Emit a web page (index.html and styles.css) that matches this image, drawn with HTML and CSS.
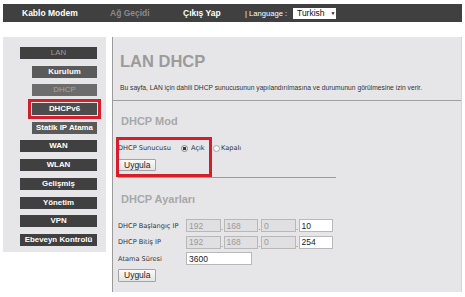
FILE: index.html
```html
<!DOCTYPE html>
<html lang="tr">
<head>
<meta charset="utf-8">
<title>LAN DHCP</title>
<link rel="stylesheet" href="styles.css">
</head>
<body>
<div class="topbar">
  <span class="tb-item tb-home">Kablo Modem</span>
  <span class="tb-item tb-dim">Ağ Geçidi</span>
  <span class="tb-item tb-logout">Çıkış Yap</span>
  <span class="tb-lang">| Language :</span>
  <span class="lang-select">Turkish <span class="caret">▼</span></span>
</div>
<div class="layout">
  <nav class="sidebar">
    <div class="nav muted">LAN</div>
    <div class="nav sub">Kurulum</div>
    <div class="nav sub disabled">DHCP</div>
    <div class="nav sub current">DHCPv6</div>
    <div class="nav sub">Statik IP Atama</div>
    <div class="nav">WAN</div>
    <div class="nav">WLAN</div>
    <div class="nav">Gelişmiş</div>
    <div class="nav">Yönetim</div>
    <div class="nav">VPN</div>
    <div class="nav">Ebeveyn Kontrolü</div>
  </nav>
  <main class="main">
    <div class="header">
      <h1 class="title">LAN DHCP</h1>
      <p class="desc">Bu sayfa, LAN için dahili DHCP sunucusunun yapılandırılmasına ve durumunun görülmesine izin verir.</p>
    </div>
    <h2 class="sec-title">DHCP Mod</h2>
    <div class="form-block">
      <div class="radio-row">
        <span class="lbl">DHCP Sunucusu</span>
        <input class="radio r-on" type="radio" name="srv" checked>
        <span class="opt">Açık</span>
        <input class="radio r-off" type="radio" name="srv">
        <span class="opt opt-off">Kapalı</span>
      </div>
      <button class="btn">Uygula</button>
      <div class="annot"></div>
    </div>
    <h2 class="sec-title sec2">DHCP Ayarları</h2>
    <div class="settings">
      <div class="frow">
        <span class="flabel">DHCP Başlangıç IP</span>
        <input class="ip ro" value="192" readonly><span class="dot">.</span>
        <input class="ip ro" value="168" readonly><span class="dot">.</span>
        <input class="ip ro" value="0" readonly><span class="dot">.</span>
        <input class="ip" value="10">
      </div>
      <div class="frow">
        <span class="flabel">DHCP Bitiş IP</span>
        <input class="ip ro" value="192" readonly><span class="dot">.</span>
        <input class="ip ro" value="168" readonly><span class="dot">.</span>
        <input class="ip ro" value="0" readonly><span class="dot">.</span>
        <input class="ip" value="254">
      </div>
      <div class="frow">
        <span class="flabel">Atama Süresi</span>
        <input class="ip wide" value="3600">
      </div>
      <button class="btn btn2">Uygula</button>
    </div>
  </main>
</div>
</body>
</html>
```

FILE: styles.css
```css
html, body {
  margin: 0;
  padding: 0;
}
body {
  background: #ffffff;
  font-family: "Liberation Sans", Arial, sans-serif;
  width: 465px;
  height: 297px;
  overflow: hidden;
}

/* ---------- top bar ---------- */
.topbar {
  margin: 4px 3px 0;
  height: 18px;
  background: #404040;
  display: flex;
  align-items: center;
  padding-left: 19px;
}
.tb-item {
  font-weight: bold;
  font-size: 8.5px;
  color: #ffffff;
  white-space: nowrap;
}
.tb-home { width: 88px; }
.tb-dim { width: 73px; color: #8a8a8a; }
.tb-logout { width: 62px; }
.tb-lang {
  width: 48px;
  font-size: 7.6px;
  color: #ffffff;
  white-space: nowrap;
}
.lang-select {
  background: #ffffff;
  width: 43px;
  height: 11px;
  box-sizing: border-box;
  padding-left: 4px;
  display: flex;
  align-items: center;
  font-size: 8.5px;
  color: #111111;
}
.caret {
  font-size: 5px;
  margin-left: 6px;
}

/* ---------- layout ---------- */
.layout {
  display: flex;
  align-items: flex-start;
  gap: 6px;
  margin: 15px 3px 0;
}

/* ---------- sidebar ---------- */
.sidebar {
  width: 103px;
  box-sizing: border-box;
  background: #e6e6e8;
  padding: 10px 9px 6px 0;
  display: flex;
  flex-direction: column;
  align-items: flex-end;
}
.nav {
  width: 77px;
  height: 12px;
  line-height: 12px;
  margin-bottom: 6.7px;
  background: #404040;
  color: #ffffff;
  font-size: 7.9px;
  font-weight: bold;
  text-align: center;
  white-space: nowrap;
}
.nav:last-child { margin-bottom: 0; }
.nav.muted { color: #9c9c9c; font-weight: normal; }
.nav.sub { width: 65px; background: #5a5a5a; }
.nav.sub.disabled { background: #6c6c6c; color: #a4a4a4; font-weight: normal; }
.nav.sub.current {
  background: #4c4c4c;
  outline: 3px solid #d51f28;
  outline-offset: 1px;
}

/* ---------- main ---------- */
.main {
  position: relative;
  width: 350px;
  height: 255px;
  box-sizing: border-box;
  background: #e6e6e8;
  border-left: 1px solid #9a9a9a;
  border-right: 1px solid #d6d6d8;
}
.header {
  padding: 14px 0 8px 7px;
  border-bottom: 1px solid #9e9e9e;
}
.title {
  margin: 0;
  font-size: 16.5px;
  line-height: 20px;
  font-weight: bold;
  color: #9b9b9b;
}
.desc {
  margin: 13px 0 0;
  font-size: 6.7px;
  line-height: 8px;
  color: #333333;
  white-space: nowrap;
}
.sec-title {
  margin: 13px 0 0 8px;
  font-size: 11px;
  line-height: 14px;
  font-weight: bold;
  color: #a8a8a8;
}
.sec2 { margin-top: 14px; }

/* ---------- DHCP mod ---------- */
.form-block {
  position: relative;
  margin: 15px 0 0 5px;
  width: 218px;
  padding-bottom: 6px;
  border-bottom: 1px solid #9a9a9a;
}
.radio-row {
  display: flex;
  align-items: center;
  height: 10px;
  font-family: "DejaVu Sans", Verdana, sans-serif;
  font-size: 6.6px;
  color: #333333;
}
.lbl { width: 63px; white-space: nowrap; }
.radio {
  appearance: none;
  -webkit-appearance: none;
  width: 7px;
  height: 7px;
  margin: 0;
  border-radius: 50%;
  border: 1px solid #a9a9a9;
  background: #f6f6f6;
  box-sizing: border-box;
}
.radio:checked {
  background: radial-gradient(circle, #3a3a3a 0 1.4px, #e8e8e8 1.9px);
  border-color: #8a8a8a;
}
.opt { margin-left: 3px; width: 20px; white-space: nowrap; }
.r-off { margin-left: 2px; }
.opt-off { margin-left: 1px; }

.btn {
  display: block;
  margin-top: 6px;
  height: 12px;
  padding: 0 5px;
  box-sizing: border-box;
  border: 1px solid #a4a4a4;
  border-radius: 1px;
  background: linear-gradient(#fafafa, #e4e4e4);
  font-family: "Liberation Sans", Arial, sans-serif;
  font-size: 8.5px;
  line-height: 10px;
  color: #222222;
}
.annot {
  position: absolute;
  left: -2px;
  top: -6px;
  width: 96px;
  height: 40px;
  box-sizing: border-box;
  border: 3px solid #d51f28;
}

/* ---------- DHCP settings ---------- */
.settings {
  margin: 13px 0 0 5px;
}
.frow {
  display: flex;
  align-items: center;
  height: 13px;
  margin-bottom: 3.5px;
}
.flabel {
  width: 68px;
  font-family: "DejaVu Sans", Verdana, sans-serif;
  font-size: 6.6px;
  color: #333333;
  white-space: nowrap;
}
.ip {
  width: 34.5px;
  height: 13px;
  box-sizing: border-box;
  margin: 0;
  padding: 0 2px;
  border: 1px solid #b8b8b8;
  background: #ffffff;
  font-family: "Liberation Sans", Arial, sans-serif;
  font-size: 8.5px;
  color: #222222;
  outline: none;
}
.ip.ro {
  background: #e0e0e2;
  color: #9a9a9a;
}
.ip.wide { width: 66px; }
.dot {
  width: 3px;
  align-self: flex-end;
  font-size: 7px;
  line-height: 9px;
  color: #444444;
  text-align: center;
}
.btn2 {
  margin-top: 0;
  height: 13px;
}
```
